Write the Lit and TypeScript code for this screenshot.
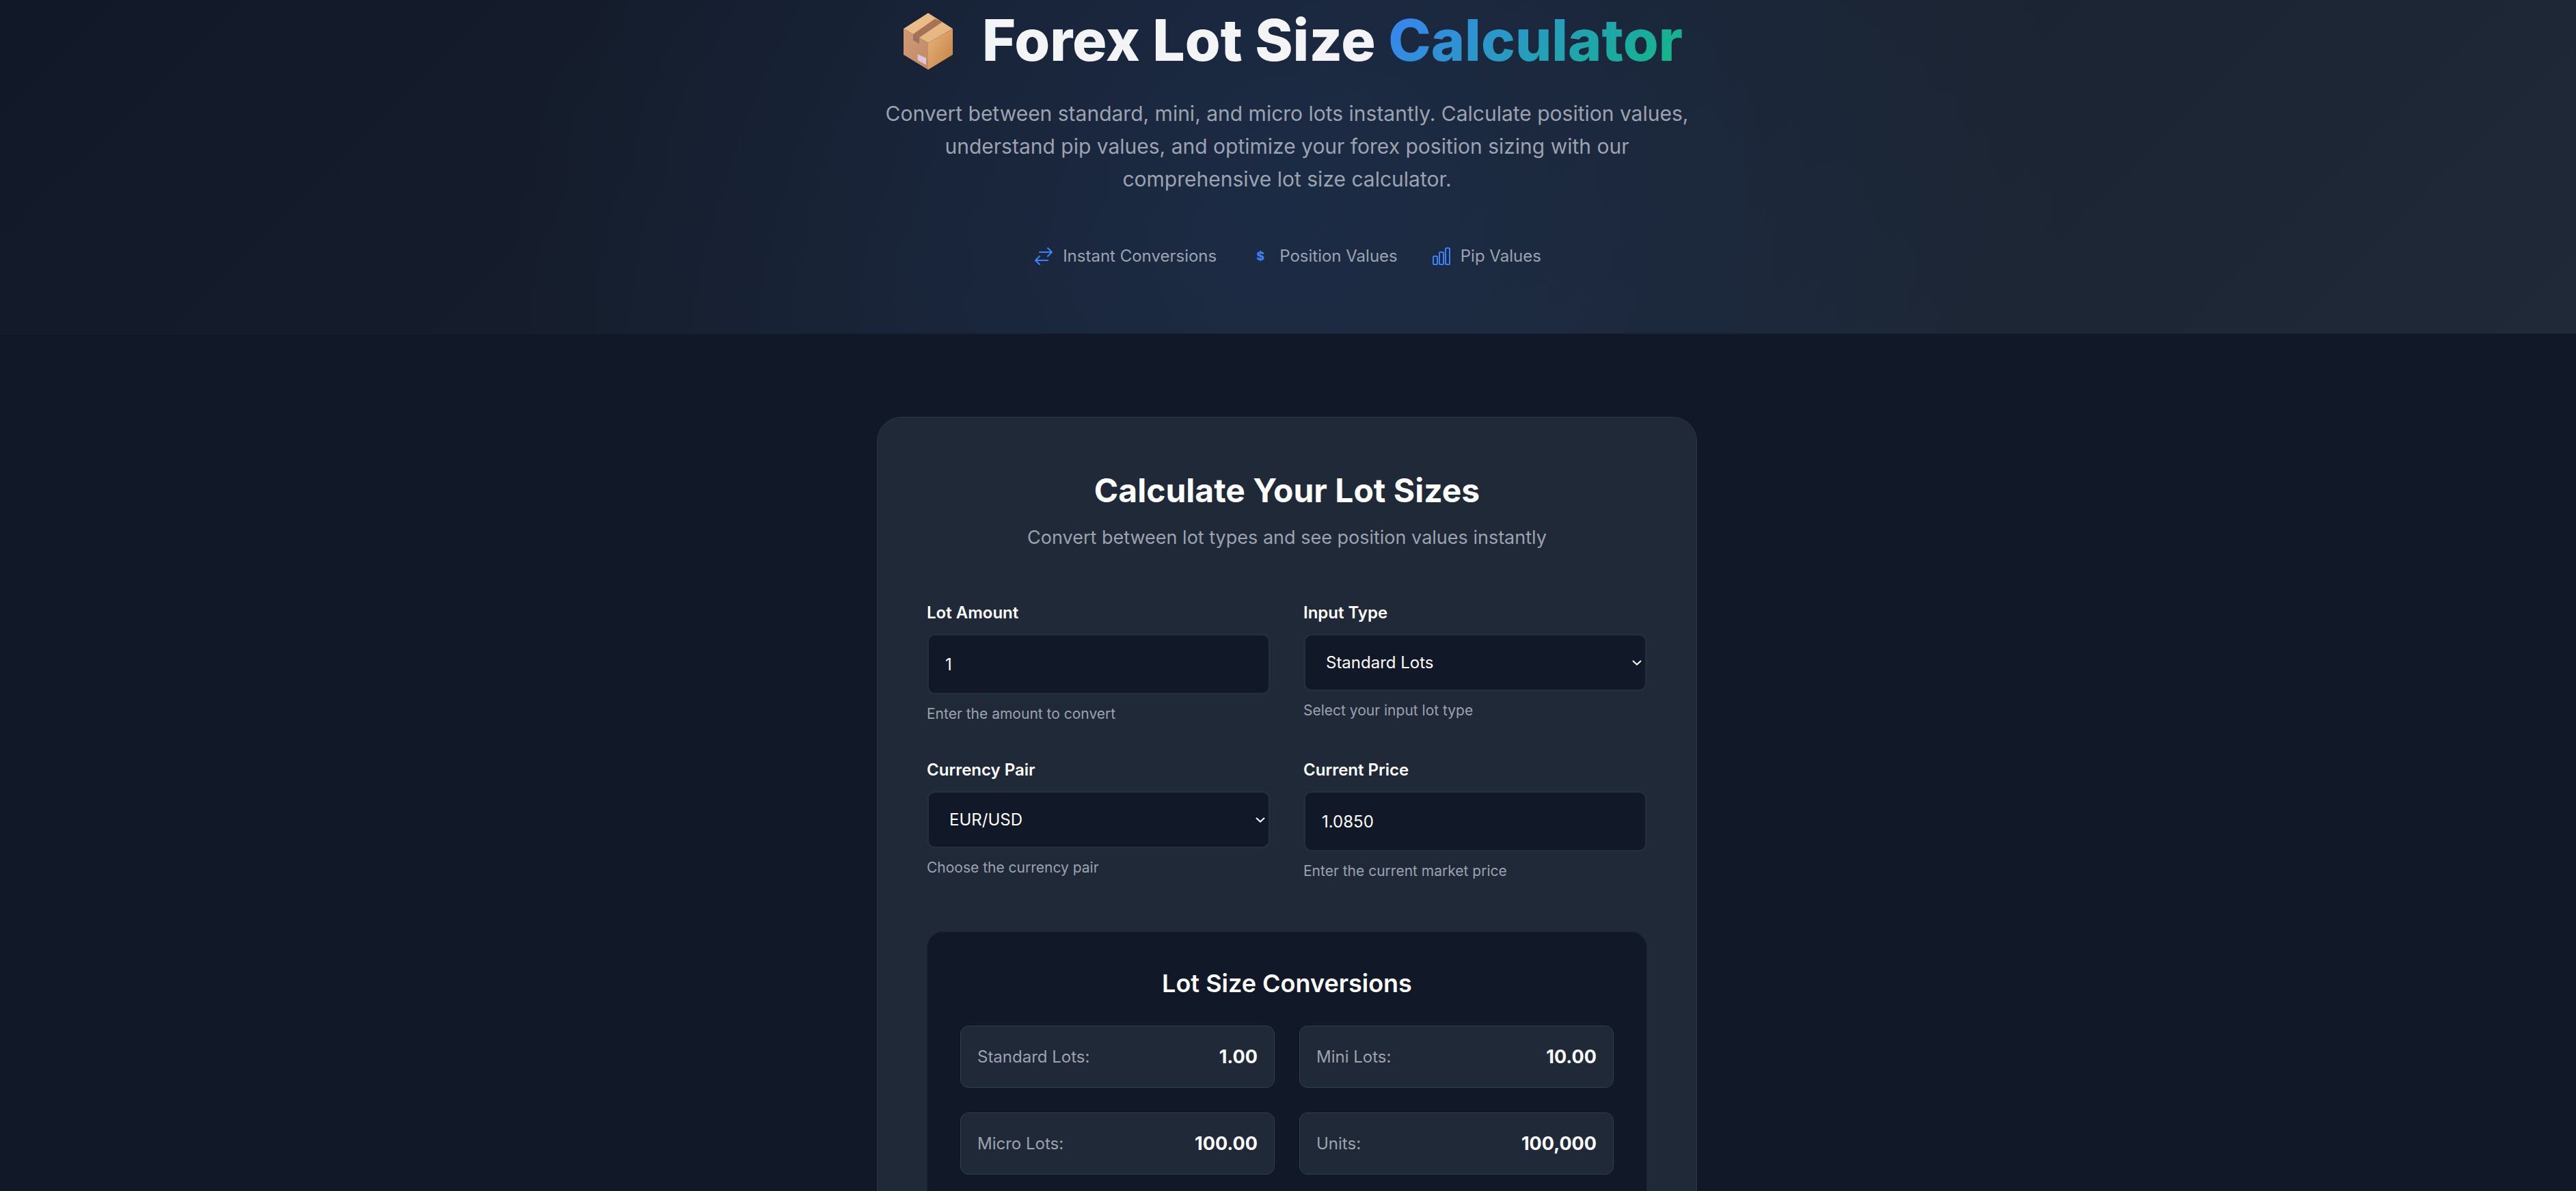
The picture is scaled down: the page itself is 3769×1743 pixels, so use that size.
import { LitElement, html, css, svg } from "lit";
import { customElement } from "lit/decorators.js";

const swap = svg`<path d="M7.5 21 3 16.5m0 0L7.5 12M3 16.5h13.5m0-13.5L21 7.5m0 0L16.5 12M21 7.5H7.5"/>`;
const bars = svg`<path d="M3 13.125C3 12.504 3.504 12 4.125 12h2.25c.621 0 1.125.504 1.125 1.125v6.75C7.5 20.496 6.996 21 6.375 21h-2.25A1.125 1.125 0 0 1 3 19.875v-6.75ZM9.75 8.625c0-.621.504-1.125 1.125-1.125h2.25c.621 0 1.125.504 1.125 1.125v11.25c0 .621-.504 1.125-1.125 1.125h-2.25a1.125 1.125 0 0 1-1.125-1.125V8.625ZM16.5 4.125c0-.621.504-1.125 1.125-1.125h2.25C20.496 3 21 3.504 21 4.125v15.75c0 .621-.504 1.125-1.125 1.125h-2.25a1.125 1.125 0 0 1-1.125-1.125V4.125Z"/>`;

@customElement("app-root")
export class AppRoot extends LitElement {
  static styles = css`
    :host { display: block; height: 100vh; overflow: hidden; background: #111827; color: #fff;
      font-family: Inter, "Noto Sans", sans-serif; }
    * { box-sizing: border-box; }
    .page { width: 3766px; }
    .hero { height: 490px; width: 3769px; display: flex; flex-direction: column; align-items: center;
      padding-right: 3px; border-bottom: 2px solid #161e2d;
      background: radial-gradient(circle 1150px at 50% 60%, rgba(59,130,246,.11) 0%, rgba(59,130,246,0) 100%),
        linear-gradient(135deg, #111827 0%, #1f2937 100%); }
    h1 { margin: 0; height: 118px; display: flex; align-items: center; font-size: 84px; font-weight: 800;
      color: #f3f4f6; white-space: pre; line-height: 118px; }
    .box { width: 72px; height: 83px; margin: 2px 43px 0 18px; flex: none; }
    .grad { background: linear-gradient(135deg, #3b82f6, #10b981); -webkit-background-clip: text;
      background-clip: text; color: transparent; }
    .lead { margin: 24px 0 0; width: 1200px; text-align: center; font-size: 30px; line-height: 48px; color: #9ca3af; }
    .features { display: flex; gap: 48px; margin-top: 64px; }
    .feature { display: flex; align-items: center; gap: 12px; font-size: 24px; font-weight: 400; color: #9ca3af; line-height: 50px; }
    .icon { width: 32px; height: 32px; flex: none; fill: none; stroke: #3b82f6; stroke-width: 1.5;
      stroke-linecap: round; stroke-linejoin: round; }
    .dollar { width: 32px; text-align: center; font-size: 18px; font-weight: 800; color: #3b82f6; }
    .card { margin: 120px auto 0; width: 1200px; border: 1px solid #2c3746; border-radius: 36px; background: #1f2937;
      padding: 72px; }
    h2 { margin: 0; text-align: center; font-size: 48px; line-height: 70px; font-weight: 700; color: #fff; }
    .sub { margin: 12px 0 0; text-align: center; font-size: 27px; line-height: 44px; color: #9ca3af; }
    .form { display: grid; grid-template-columns: 1fr 1fr; column-gap: 48px; row-gap: 46px; margin-top: 69px; }
    label { display: block; font-size: 24px; line-height: 38px; font-weight: 600; color: #fff; margin-bottom: 11px; }
    .ctl { display: block; width: 100%; border: 3px solid #232d3c; border-radius: 12px; background: #111827; color: #fff;
      font: 400 24px Inter, sans-serif; outline: none; margin: 0; }
    input.ctl { height: 90px; padding: 0 24px; }
    .sel { position: relative; }
    select.ctl { height: 85px; padding: 0 30px; appearance: none; -webkit-appearance: none; }
    .chev { position: absolute; right: 8px; top: 39px; width: 14px; height: 8px; fill: none; stroke: #f3f4f6; stroke-width: 2.2;
      pointer-events: none; }
    .hint { margin: 11px 0 0; font-size: 21px; line-height: 34px; color: #9ca3af; }
    .results { margin-top: 71px; border: 1px solid #1c2533; border-radius: 24px; background: #111827; padding: 46px 48px 48px; }
    h3 { margin: 0 0 33px; text-align: center; font-size: 36px; line-height: 58px; font-weight: 600; color: #fff; }
    .grid { display: grid; grid-template-columns: 1fr 1fr; gap: 36px; }
    .item { height: 91px; display: flex; align-items: center; justify-content: space-between; padding: 0 24px;
      border: 1px solid #323c4c; border-radius: 12px; background: #1f2937; font-size: 24px; color: #9ca3af; }
    .val { font-size: 27px; font-weight: 700; color: #fff; }
  `;

  private field(label: string, control: unknown, hint: string) {
    return html`<div><label>${label}</label>${control}<p class="hint">${hint}</p></div>`;
  }

  private select(options: string[]) {
    return html`<div class="sel"><select class="ctl">${options.map((o) => html`<option>${o}</option>`)}</select>
      <svg class="chev" viewBox="0 0 14 8"><path d="M1 1l6 5.500L13 1"/></svg></div>`;
  }

  render() {
    const items = [
      ["Standard Lots:", "1.00"],
      ["Mini Lots:", "10.00"],
      ["Micro Lots:", "100.00"],
      ["Units:", "100,000"],
    ];
    return html`<div class="page">
      <header class="hero">
        <h1><svg class="box" viewBox="0 0 72 83">
            <defs>
              <linearGradient id="t" x1="0" y1="0" x2="1" y2="1"><stop offset="0" stop-color="#eec18a"/><stop offset="1" stop-color="#e3b27c"/></linearGradient>
              <linearGradient id="l" x1="0" y1="0" x2="1" y2="1"><stop offset="0" stop-color="#cf9a72"/><stop offset="1" stop-color="#c08a68"/></linearGradient>
              <linearGradient id="r" x1="0" y1="0" x2="1" y2="1"><stop offset="0" stop-color="#e8b57c"/><stop offset="1" stop-color="#c47f42"/></linearGradient>
            </defs>
            <path d="M36 0 72 23 36 44 0 23Z" fill="url(#t)"/>
            <path d="M0 23 36 44V83L0 61Z" fill="url(#l)"/>
            <path d="M72 23 36 44V83L72 61Z" fill="url(#r)"/>
            <path d="M14 31 46 8.500 57 13 23 36Z" fill="#a67355"/>
            <path d="M14 31 23 36V45L14 40Z" fill="#9c7162"/>
            <path d="M20.700 60.300 33 66V76L20.700 69Z" fill="#dcc6dc"/>
          </svg>Forex Lot Size <span class="grad">Calculator</span></h1>
        <p class="lead">Convert between standard, mini, and micro lots instantly. Calculate position values, understand pip values, and optimize your forex position sizing with our comprehensive lot size calculator.</p>
        <div class="features">
          <div class="feature"><svg class="icon" viewBox="0 0 24 24">${swap}</svg>Instant Conversions</div>
          <div class="feature"><span class="dollar">$</span>Position Values</div>
          <div class="feature"><svg class="icon" viewBox="0 0 24 24">${bars}</svg>Pip Values</div>
        </div>
      </header>
      <section class="card">
        <h2>Calculate Your Lot Sizes</h2>
        <p class="sub">Convert between lot types and see position values instantly</p>
        <div class="form">
          ${this.field("Lot Amount", html`<input class="ctl" value="1" />`, "Enter the amount to convert")}
          ${this.field("Input Type", this.select(["Standard Lots", "Mini Lots", "Micro Lots", "Units"]), "Select your input lot type")}
          ${this.field("Currency Pair", this.select(["EUR/USD", "GBP/USD", "USD/JPY"]), "Choose the currency pair")}
          ${this.field("Current Price", html`<input class="ctl" value="1.0850" />`, "Enter the current market price")}
        </div>
        <div class="results">
          <h3>Lot Size Conversions</h3>
          <div class="grid">
            ${items.map(([k, v]) => html`<div class="item"><span>${k}</span><span class="val">${v}</span></div>`)}
          </div>
        </div>
      </section>
    </div>`;
  }
}
